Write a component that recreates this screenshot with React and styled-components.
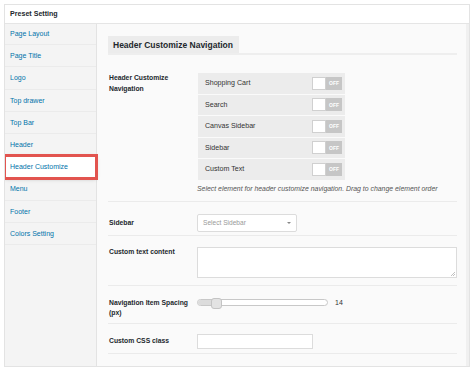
import React from 'react';
import styled, { createGlobalStyle } from 'styled-components';

const GlobalStyle = createGlobalStyle`
    body {
        margin: 0;
        background: #fff;
        font-family: "Liberation Sans", Arial, sans-serif;
        color: #23282d;
    }
`

const Panel = styled.div`
    margin: 4px 0 0 4px;
    width: 466px;
    height: 363px;
    box-sizing: border-box;
    border: 1px solid #e3e3e3;
    display: flex;
    flex-direction: column;
    overflow: hidden;
`

const PanelHeader = styled.div`
    height: 18px;
    display: flex;
    align-items: center;
    padding: 0 5px;
    font-size: 7.1px;
    font-weight: bold;
    background: #fff;
    border-bottom: 1px solid #e5e5e5;
`

const Body = styled.div`
    flex: 1;
    display: flex;
`

const Sidebar = styled.ul`
    width: 92px;
    margin: 0;
    padding: 0;
    list-style: none;
    background: #f4f4f4;
    border-right: 1px solid #e3e3e3;
`

const MenuItem = styled.li`
    height: 21.2px;
    display: flex;
    align-items: center;
    padding-left: 5px;
    font-size: 7px;
    color: #0073aa;
    border-bottom: 1px solid #ebebeb;
    position: relative;
    background: ${props => props.active ? '#fff' : 'transparent'};
    outline: ${props => props.active ? '3px solid #e2544f' : 'none'};
    outline-offset: -1px;
    box-shadow: ${props => props.active ? '0 1px 4px rgba(0,0,0,0.25)' : 'none'};
    z-index: ${props => props.active ? 2 : 'auto'};
    &:first-child {
        margin-top: -1px;
    }
`

const Content = styled.div`
    flex: 1;
    background: #fafafa;
    padding: 12px 9px 0 11px;
    border-right: 3px solid #f0f0f0;
`

const SectionHead = styled.div`
    border-bottom: 2px solid #eeeeee;
    display: flex;
`

const SectionTitle = styled.div`
    background: #ececec;
    font-size: 8.5px;
    font-weight: bold;
    padding: 4px 6px 3px 5px;
    line-height: 10px;
`

const Row = styled.div`
    display: flex;
    padding: ${props => props.pad || '10px 0 8px'};
    border-bottom: 1px solid #ebebeb;
`

const Label = styled.div`
    width: 88px;
    flex-shrink: 0;
    padding-left: 1px;
    font-size: 6.8px;
    font-weight: bold;
    line-height: 10.5px;
    padding-top: ${props => props.top || 0}px;
`

const Field = styled.div`
    flex: 1;
    display: flex;
    flex-direction: column;
    align-items: flex-start;
`

const SortList = styled.div`
    width: 147px;
    margin-left: 1px;
    display: flex;
    flex-direction: column;
    gap: 1px;
`

const SortItem = styled.div`
    height: 20.5px;
    background: #ececec;
    display: flex;
    align-items: center;
    justify-content: space-between;
    padding: 0 3px 0 7px;
    font-size: 7.1px;
    color: #333;
`

const Toggle = styled.div`
    width: 30px;
    height: 13px;
    display: flex;
    background: #c6c6c6;
`

const Knob = styled.div`
    width: 12px;
    height: 11px;
    background: #fff;
    border: 1px solid #d0d0d0;
`

const ToggleText = styled.div`
    flex: 1;
    display: flex;
    align-items: center;
    justify-content: center;
    color: #fff;
    font-size: 5px;
    font-weight: bold;
`

const Help = styled.div`
    margin-top: 5px;
    font-size: 6.9px;
    font-style: italic;
    color: #555;
`

const Select = styled.div`
    width: 100px;
    height: 18px;
    box-sizing: border-box;
    background: #fff;
    border: 1px solid #dcdcdc;
    border-radius: 2px;
    display: flex;
    align-items: center;
    justify-content: space-between;
    padding: 0 5px;
    font-size: 6.6px;
    color: #999;
`

const Caret = styled.span`
    width: 0;
    height: 0;
    border-left: 2px solid transparent;
    border-right: 2px solid transparent;
    border-top: 2.5px solid #888;
`

const TextArea = styled.div`
    width: 260px;
    height: 31px;
    box-sizing: border-box;
    background: #fff;
    border: 1px solid #dcdcdc;
    position: relative;
`

const Grip = styled.svg`
    position: absolute;
    right: 1px;
    bottom: 1px;
`

const SliderWrap = styled.div`
    display: flex;
    align-items: center;
    gap: 7px;
    padding-top: 1px;
    font-size: 7px;
    color: #333;
`

const Track = styled.div`
    width: 131px;
    height: 7px;
    box-sizing: border-box;
    border: 1px solid #c8c8c8;
    border-radius: 4px;
    background: #fff;
    position: relative;
`

const Fill = styled.div`
    height: 100%;
    border-radius: 4px 0 0 4px;
    background: #dcdcdc;
`

const Handle = styled.div`
    position: absolute;
    top: -2px;
    width: 9px;
    height: 9px;
    border-radius: 3px;
    background: #e3e3e3;
    border: 1px solid #c4c4c4;
`

const Input = styled.div`
    width: 116px;
    height: 15px;
    box-sizing: border-box;
    background: #fff;
    border: 1px solid #dcdcdc;
`

const menu = ['Page Layout', 'Page Title', 'Logo', 'Top drawer', 'Top Bar', 'Header', 'Header Customize', 'Menu', 'Footer', 'Colors Setting']
const navItems = ['Shopping Cart', 'Search', 'Canvas Sidebar', 'Sidebar', 'Custom Text']

const App = () => {
    const spacing = 14
    const pct = (spacing / 100) * 100
    return (
        <>
            <GlobalStyle />
            <Panel>
                <PanelHeader>Preset Setting</PanelHeader>
                <Body>
                    <Sidebar>
                        {menu.map(item => (
                            <MenuItem key={item} active={item === 'Header Customize'}>{item}</MenuItem>
                        ))}
                    </Sidebar>
                    <Content>
                        <SectionHead>
                            <SectionTitle>Header Customize Navigation</SectionTitle>
                        </SectionHead>
                        <Row pad="18px 0 9px">
                            <Label>Header Customize<br />Navigation</Label>
                            <Field>
                                <SortList>
                                    {navItems.map(item => (
                                        <SortItem key={item}>
                                            {item}
                                            <Toggle>
                                                <Knob />
                                                <ToggleText>OFF</ToggleText>
                                            </Toggle>
                                        </SortItem>
                                    ))}
                                </SortList>
                                <Help>Select element for header customize navigation. Drag to change element order</Help>
                            </Field>
                        </Row>
                        <Row pad="12px 0 3px">
                            <Label top={4}>Sidebar</Label>
                            <Field>
                                <Select>
                                    Select Sidebar
                                    <Caret />
                                </Select>
                            </Field>
                        </Row>
                        <Row pad="11px 0 7px">
                            <Label>Custom text content</Label>
                            <Field>
                                <TextArea>
                                    <Grip width="5" height="5" viewBox="0 0 5 5">
                                        <path d="M1 5 L5 1 M3 5 L5 3" stroke="#999" strokeWidth="0.6" />
                                    </Grip>
                                </TextArea>
                            </Field>
                        </Row>
                        <Row pad="12px 0 4px">
                            <Label>Navigation Item Spacing<br />(px)</Label>
                            <Field>
                                <SliderWrap>
                                    <Track>
                                        <Fill style={{ width: `${pct}%` }} />
                                        <Handle style={{ left: `${pct - 4}%` }} />
                                    </Track>
                                    {spacing}
                                </SliderWrap>
                            </Field>
                        </Row>
                        <Row pad="10px 0 4px">
                            <Label top={2}>Custom CSS class</Label>
                            <Field>
                                <Input />
                            </Field>
                        </Row>
                    </Content>
                </Body>
            </Panel>
        </>
    )
}

export default App
